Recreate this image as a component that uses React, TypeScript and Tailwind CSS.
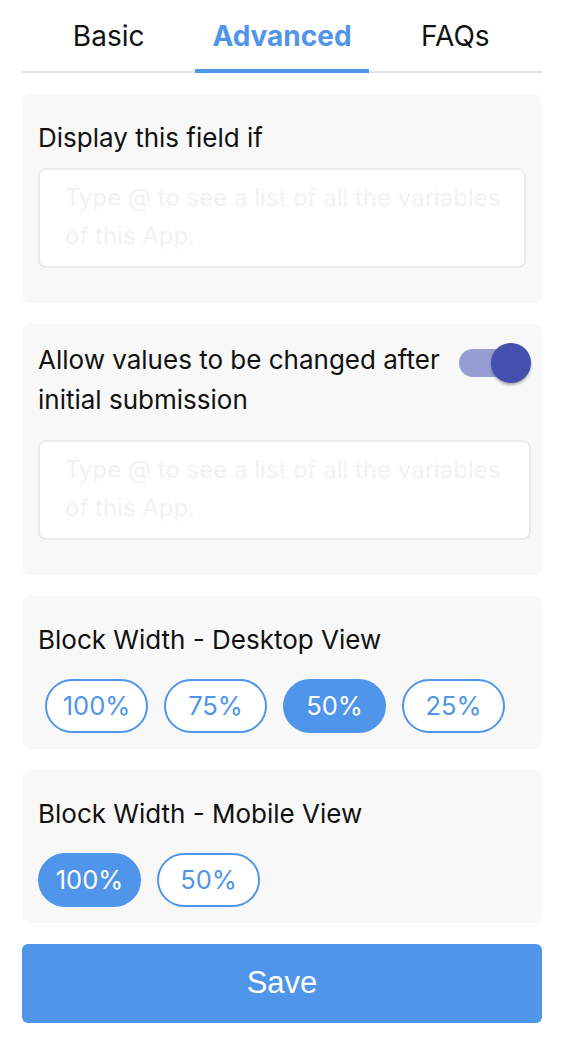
import { useState } from 'react'

const PLACEHOLDER = 'Type @ to see a list of all the variables of this App.'

function Pill({ label, active }: { label: string; active?: boolean }) {
  return (
    <button
      className={`h-[54px] w-[103px] rounded-full border-2 border-[#4f95ea] text-[25.5px] ${active ? 'bg-[#4f95ea] text-white' : 'bg-white text-[#4f95ea]'}`}
    >
      {label}
    </button>
  )
}

export default function App() {
  const [tab, setTab] = useState('Advanced')
  const [allow, setAllow] = useState(true)
  const [desktop, setDesktop] = useState('50%')
  const [mobile, setMobile] = useState('100%')

  return (
    <div className="bg-white px-[22px] pb-[17px] font-['Inter',sans-serif] text-[#111]">
      {/* tabs */}
      <div className="flex border-b-2 border-[#e2e4e8]">
        {['Basic', 'Advanced', 'FAQs'].map((t) => (
          <button
            key={t}
            onClick={() => setTab(t)}
            className={`-mb-[2px] flex h-[73px] flex-1 items-center justify-center border-b-4 pt-[3px] text-[28px] ${tab === t ? 'border-[#4f95ea] font-bold text-[#4f95ea]' : 'border-transparent'}`}
          >
            {t}
          </button>
        ))}
      </div>

      <div className="mt-[21px] flex flex-col gap-[21px]">
        {/* Display this field if */}
        <div className="rounded-lg bg-[#f8f8f8] px-4 pb-[35px] pt-6">
          <p className="text-[26px] leading-[40px]">Display this field if</p>
          <div className="mt-[10px] h-[100px] rounded-lg border-2 border-[#ebebeb] bg-white pl-[25px] pr-[12px] pt-[9px] text-[24px] leading-[38px] text-[#f2f2f2]">
            {PLACEHOLDER}
          </div>
        </div>

        {/* Allow values */}
        <div className="rounded-lg bg-[#f8f8f8] pb-[35px] pl-4 pr-[11px] pt-4">
          <div className="flex items-start justify-between">
            <p className="w-[415px] text-[26px] leading-[40px]">Allow values to be changed after initial submission</p>
            <button onClick={() => setAllow(!allow)} className="relative mt-[3px] h-[40px] w-[72px]">
              <span className={`absolute left-0 top-[6px] h-[28px] w-[68px] rounded-full ${allow ? 'bg-[#959dd3]' : 'bg-[#bdbdbd]'}`} />
              <span
                className={`absolute top-0 h-[40px] w-[40px] rounded-full shadow-[0_2px_3px_rgba(0,0,0,0.3)] ${allow ? 'left-[32px] bg-[#4350ae]' : 'left-[-4px] bg-white'}`}
              />
            </button>
          </div>
          <div className="mt-5 h-[100px] rounded-lg border-2 border-[#ebebeb] bg-white pl-[25px] pr-[12px] pt-[9px] text-[24px] leading-[38px] text-[#f2f2f2]">
            {PLACEHOLDER}
          </div>
        </div>

        {/* Desktop */}
        <div className="rounded-lg bg-[#f8f8f8] px-4 pb-4 pt-6">
          <p className="text-[26px] leading-[40px]">Block Width - Desktop View</p>
          <div className="mt-[19px] flex gap-4 pl-[7px]">
            {['100%', '75%', '50%', '25%'].map((v) => (
              <div key={v} onClick={() => setDesktop(v)}>
                <Pill label={v} active={desktop === v} />
              </div>
            ))}
          </div>
        </div>

        {/* Mobile */}
        <div className="rounded-lg bg-[#f8f8f8] px-4 pb-4 pt-6">
          <p className="text-[26px] leading-[40px]">Block Width - Mobile View</p>
          <div className="mt-[19px] flex gap-4">
            {['100%', '50%'].map((v) => (
              <div key={v} onClick={() => setMobile(v)}>
                <Pill label={v} active={mobile === v} />
              </div>
            ))}
          </div>
        </div>

        <button className="h-[79px] w-full rounded-md bg-[#4f95ea] font-['Liberation_Sans',Arial,sans-serif] text-[31px] text-white">
          Save
        </button>
      </div>
    </div>
  )
}
